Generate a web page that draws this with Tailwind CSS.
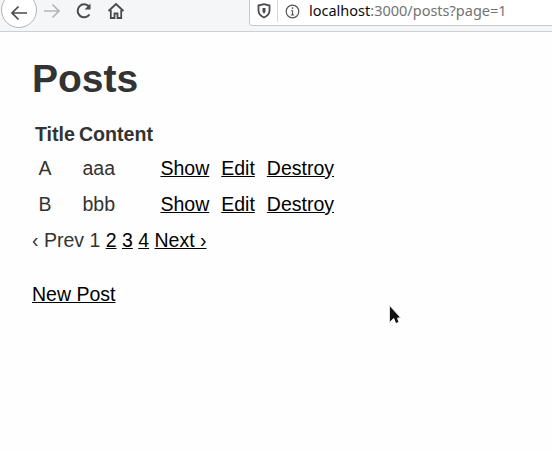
<!DOCTYPE html>
<html><head><meta charset="utf-8"><script src="https://cdn.jsdelivr.net/npm/@tailwindcss/browser@4"></script></head>
<body class="bg-[#fefefe] w-[552px] h-[451px] overflow-hidden font-['Liberation_Sans',sans-serif] text-[#333] relative">
<header class="h-[32px] bg-[#f5f6f7] border-b border-[#cfcfd1] flex items-start relative">
  <div class="w-[36px] h-[36px] -mt-[8px] ml-[1px] rounded-full bg-white border border-[#b4b4b6] flex items-center justify-center shrink-0 pt-[6px]">
    <svg width="18" height="18" viewBox="0 0 18 18" fill="none" stroke="#4a4a4f" stroke-width="1.700"><path d="M17 9H2M8.500 2.500 2 9l6.500 6.500"/></svg>
  </div>
  <svg class="ml-[6px] mt-[2px] shrink-0" width="18" height="18" viewBox="0 0 18 18" fill="none" stroke="#b5b5b8" stroke-width="1.700"><path d="M1 9h15M9.500 2.500 16 9l-6.500 6.500"/></svg>
  <svg class="ml-[14px] mt-[2px] shrink-0" width="18" height="18" viewBox="0 0 18 18" fill="none" stroke="#4a4a4f" stroke-width="2"><path d="M14.500 12.500A6.500 6.500 0 1 1 14 4.500"/><path d="M15.500 1.500v6h-6z" fill="#4a4a4f" stroke="none"/></svg>
  <svg class="ml-[14px] mt-[2px] shrink-0" width="18" height="18" viewBox="0 0 18 18" fill="none" stroke="#4a4a4f" stroke-width="1.800"><path d="M1.500 9 9 2l7.500 7"/><path d="M3.800 8v8h3.700v-4.500h3V16h3.700V8"/></svg>
  <div class="absolute left-[249px] -top-[4px] w-[320px] h-[30px] bg-white border border-[#c9c9cc] rounded-[3px] flex items-center">
    <svg class="ml-[7px] shrink-0" width="14" height="16" viewBox="0 0 14 16" fill="none" stroke="#4a4a4f" stroke-width="1.800"><path d="M1.500 2.500 7 1.200l5.500 1.300v5c0 3.500-2.500 5.700-5.500 7-3-1.300-5.500-3.500-5.500-7z"/><path d="M5.500 5h3v3.500L7 11 5.500 8.500z" fill="#4a4a4f" stroke="none"/></svg>
    <div class="w-px h-[22px] bg-[#d7d7db] ml-[6px] shrink-0"></div>
    <svg class="ml-[7px] shrink-0" width="15" height="15" viewBox="0 0 15 15" fill="none" stroke="#55555a" stroke-width="1.200"><circle cx="7.500" cy="7.500" r="6.300"/><path d="M7.500 6.500v4.500M5.800 11h3.400M6.200 6.500h1.300" /><path d="M7.500 3.300v1.600" stroke-width="1.500"/></svg>
    <span class="ml-[9px] text-[14.500px] whitespace-nowrap font-['Noto_Sans','Open_Sans',sans-serif] text-[#0c0c0d]">localhost<span class="text-[#737373]">:3000/posts?page=1</span></span>
  </div>
</header>
<main class="pl-[32px] text-[19.500px] leading-[24px]">
  <h1 class="text-[39px] leading-[45px] font-bold pt-[24px] mb-[18px]">Posts</h1>
  <table class="border-separate border-spacing-[3px]">
    <thead><tr><th class="p-0 pr-[1px] pb-[2px] text-[19.600px] font-bold text-left leading-[24px]">Title</th><th class="p-0 pb-[2px] text-[19.600px] font-bold text-left leading-[24px]">Content</th><th colspan="3"></th></tr></thead>
    <tbody>
      <tr><td class="py-[4.500px] pl-[3.500px] pr-[5.500px]">A</td><td class="py-[4.500px] pl-[3.500px] pr-[5.500px]">aaa</td><td class="p-[4.500px]"><a class="text-black underline" href="#">Show</a></td><td class="p-[4.500px]"><a class="text-black underline" href="#">Edit</a></td><td class="p-[4.500px]"><a class="text-black underline" href="#">Destroy</a></td></tr>
      <tr><td class="py-[4.500px] pl-[3.500px] pr-[5.500px]">B</td><td class="py-[4.500px] pl-[3.500px] pr-[5.500px]">bbb</td><td class="p-[4.500px]"><a class="text-black underline" href="#">Show</a></td><td class="p-[4.500px]"><a class="text-black underline" href="#">Edit</a></td><td class="p-[4.500px]"><a class="text-black underline" href="#">Destroy</a></td></tr>
    </tbody>
  </table>
  <nav class="mt-[5px]">‹ Prev 1 <a class="text-black underline" href="#">2</a> <a class="text-black underline" href="#">3</a> <a class="text-black underline" href="#">4</a> <a class="text-black underline" href="#">Next ›</a></nav>
  <p class="mt-[30px]"><a class="text-black underline" href="#">New Post</a></p>
</main>
<svg class="absolute left-[388px] top-[304px]" width="14" height="24" viewBox="0 0 14 24"><path d="M1.500 1.500v17l4-4 3 0 4-1z" fill="#111" stroke="#ddd" stroke-width="1"/><path d="M6 14l2 5 2.500-1-2-5z" fill="#111"/></svg>
</body></html>
